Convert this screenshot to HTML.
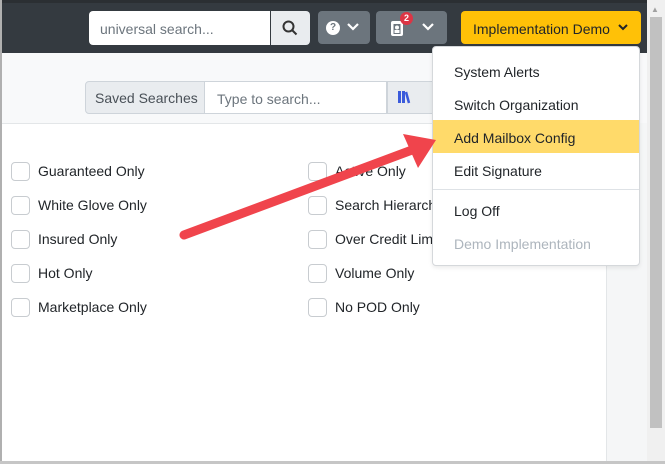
<!DOCTYPE html><html><head><style>
body{margin:0;width:665px;height:464px;overflow:hidden;font-family:"Liberation Sans",sans-serif;position:relative;background:#fff}
.a{position:absolute}
.cb{position:absolute;width:17px;height:17px;border:1.5px solid #c8ccd0;border-radius:4px;background:#fff}
.lb{position:absolute;font-size:14px;color:#212529}
.mi{position:absolute;left:454px;font-size:14px;color:#212529}
</style></head><body>
<div class="a" style="left:0;top:0;width:648px;height:53px;background:#343a40"></div>
<div class="a" style="left:0;top:0;width:648px;height:3px;background:#2b2f33"></div>
<div class="a" style="left:0;top:53px;width:648px;height:70px;background:#f8f9fa;border-bottom:1px solid #e3e6e8"></div>
<div class="a" style="left:606px;top:123px;width:42px;height:340px;background:#f5f6f7;border-left:1px solid #e3e6e8"></div>
<div class="a" style="left:647px;top:0;width:18px;height:464px;background:#f0f0f0"></div>
<div class="a" style="left:650px;top:17px;width:12px;height:411px;background:#c1c1c1"></div>
<div class="a" style="left:651px;top:5px;font-size:8px;color:#a0a0a0">▲</div>
<div class="a" style="left:0;top:0;width:2px;height:464px;background:#b0b0b0"></div>
<div class="a" style="left:0;top:461px;width:665px;height:3px;background:#c6c6c6"></div>
<!-- search -->
<div class="a" style="left:89px;top:11px;width:181px;height:34px;background:#fff;border-radius:4px 0 0 4px"></div>
<div class="a" style="left:100px;top:21px;font-size:14px;color:#6c757d">universal search...</div>
<div class="a" style="left:271px;top:11px;width:39px;height:34px;background:#e9ecef;border-radius:0 4px 4px 0"></div>
<svg class="a" style="left:282px;top:20px" width="16" height="16"><circle cx="6.5" cy="6.5" r="5" stroke="#333" stroke-width="2" fill="none"/><line x1="10" y1="10" x2="14.5" y2="14.5" stroke="#333" stroke-width="2"/></svg>
<div class="a" style="left:318px;top:11px;width:52px;height:33px;background:#6c757d;border-radius:4px"></div>
<div class="a" style="left:326px;top:21px;width:14px;height:14px;border-radius:50%;background:#fff;color:#6c757d;font-size:10px;font-weight:bold;text-align:center;line-height:14px">?</div>
<svg class="a" style="left:346px;top:22px" width="14" height="10"><path d="M2 2l5 5 5-5" stroke="#fff" stroke-width="2.2" fill="none"/></svg>
<div class="a" style="left:376px;top:11px;width:71px;height:33px;background:#6c757d;border-radius:4px"></div>
<svg class="a" style="left:390px;top:19px" width="14" height="18"><rect x="1" y="2" width="12" height="15" rx="2" fill="#fff"/><rect x="3.5" y="5" width="7" height="10" fill="#6c757d"/><circle cx="7" cy="8.5" r="2" fill="#fff"/><rect x="4.5" y="11" width="5" height="3" fill="#fff"/></svg>
<div class="a" style="left:400px;top:12px;width:13px;height:13px;border-radius:50%;background:#dc3545;color:#fff;font-size:9px;font-weight:bold;text-align:center;line-height:13px">2</div>
<svg class="a" style="left:421px;top:22px" width="14" height="10"><path d="M2 2l5 5 5-5" stroke="#fff" stroke-width="2.2" fill="none"/></svg>
<div class="a" style="left:461px;top:11px;width:180px;height:33px;background:#ffc107;border-radius:4px"></div>
<div class="a" style="left:473px;top:21px;font-size:14px;color:#212529">Implementation Demo</div>
<svg class="a" style="left:618px;top:24px" width="10" height="8"><path d="M1 1l4 4 4-4" stroke="#212529" stroke-width="2" fill="none"/></svg>
<!-- saved searches -->
<div class="a" style="left:85px;top:81px;width:120px;height:33px;background:#e9ecef;border:1px solid #ced4da;border-radius:4px 0 0 4px;box-sizing:border-box"></div>
<div class="a" style="left:95px;top:90px;font-size:14px;color:#495057">Saved Searches</div>
<div class="a" style="left:205px;top:81px;width:182px;height:33px;background:#fff;border:1px solid #ced4da;border-left:0;box-sizing:border-box"></div>
<div class="a" style="left:217px;top:91px;font-size:14px;color:#6c757d">Type to search...</div>
<div class="a" style="left:387px;top:81px;width:50px;height:33px;background:#e9ecef;border:1px solid #ced4da;box-sizing:border-box"></div>
<svg class="a" style="left:397px;top:90px" width="14" height="14"><rect x="1" y="1" width="3" height="12" fill="#3b5bdb"/><rect x="5" y="1" width="3" height="12" fill="#3b5bdb"/><path d="M9 2l3 11" stroke="#3b5bdb" stroke-width="2.5"/></svg>
<!-- checkboxes -->
<div class="cb" style="left:11px;top:162px"></div><div class="lb" style="left:38px;top:163px">Guaranteed Only</div>
<div class="cb" style="left:11px;top:196px"></div><div class="lb" style="left:38px;top:197px">White Glove Only</div>
<div class="cb" style="left:11px;top:230px"></div><div class="lb" style="left:38px;top:231px">Insured Only</div>
<div class="cb" style="left:11px;top:264px"></div><div class="lb" style="left:38px;top:265px">Hot Only</div>
<div class="cb" style="left:11px;top:298px"></div><div class="lb" style="left:38px;top:299px">Marketplace Only</div>
<div class="cb" style="left:308px;top:162px"></div><div class="lb" style="left:335px;top:163px">Active Only</div>
<div class="cb" style="left:308px;top:196px"></div><div class="lb" style="left:335px;top:197px">Search Hierarchy</div>
<div class="cb" style="left:308px;top:230px"></div><div class="lb" style="left:335px;top:231px">Over Credit Limit</div>
<div class="cb" style="left:308px;top:264px"></div><div class="lb" style="left:335px;top:265px">Volume Only</div>
<div class="cb" style="left:308px;top:298px"></div><div class="lb" style="left:335px;top:299px">No POD Only</div>
<!-- dropdown -->
<div class="a" style="left:432px;top:46px;width:208px;height:220px;background:#fff;border:1px solid #d5d8db;border-radius:4px;box-sizing:border-box;box-shadow:0 2px 4px rgba(0,0,0,.08)"></div>
<div class="a" style="left:433px;top:120px;width:206px;height:33px;background:#ffda6a"></div>
<div class="a" style="left:433px;top:189px;width:206px;height:1px;background:#dee2e6"></div>
<div class="mi" style="top:64px">System Alerts</div>
<div class="mi" style="top:97px">Switch Organization</div>
<div class="mi" style="top:130px">Add Mailbox Config</div>
<div class="mi" style="top:163px">Edit Signature</div>
<div class="mi" style="top:203px">Log Off</div>
<div class="mi" style="top:236px;color:#adb5bd">Demo Implementation</div>
<!-- arrow -->
<svg class="a" style="left:0;top:0" width="665" height="464"><line x1="184" y1="235" x2="412" y2="150" stroke="#f0444c" stroke-width="9" stroke-linecap="round"/><polygon points="436,140 403,134 418,168" fill="#f0444c"/></svg>
</body></html>
